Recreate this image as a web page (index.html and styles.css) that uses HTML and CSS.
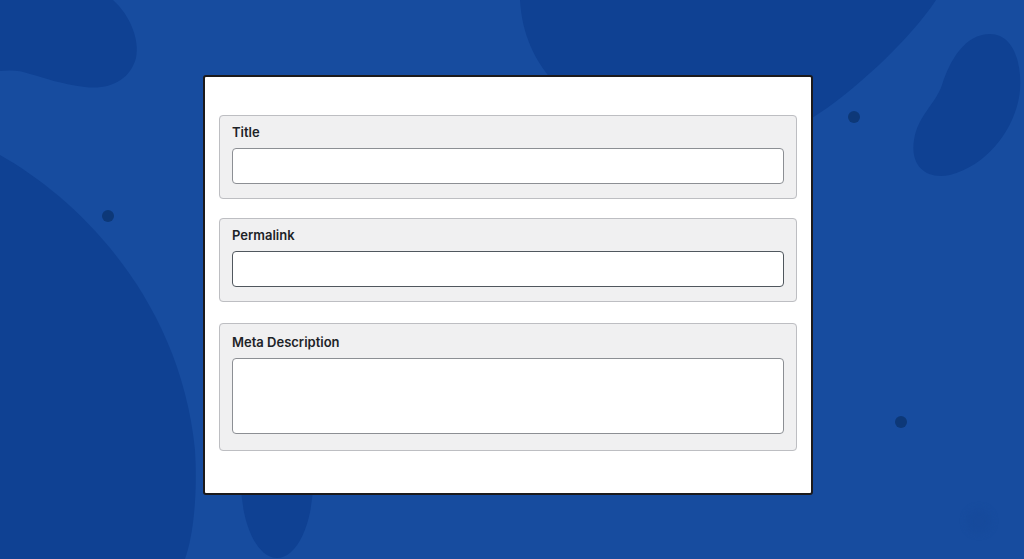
FILE: index.html
```html
<!DOCTYPE html>
<html lang="en">
<head>
<meta charset="utf-8">
<title>Post fields</title>
<link rel="stylesheet" href="styles.css">
</head>
<body>
<svg class="backdrop" width="1024" height="559" viewBox="0 0 1024 559" aria-hidden="true">
  <path class="blob" d="M0,0 H113 C130,15 140,40 136,58 C130,80 110,90 85,87 C60,84 45,78 30,74 C20,70 10,70 0,71 Z"/>
  <path class="blob" d="M0,155 C80,200 180,300 195,450 C198,500 192,540 185,559 H0 Z"/>
  <path class="blob" d="M520,0 C522,35 535,60 552,80 L700,220 L812,118 C850,95 910,40 936,0 Z"/>
  <path class="blob" d="M990,34 C1012,34 1022,60 1020,90 C1017,125 990,165 950,175 C925,180 910,165 914,140 C918,115 935,105 942,85 C950,60 965,34 990,34 Z"/>
  <ellipse class="blob" cx="277" cy="482" rx="36" ry="76"/>
  <circle class="faint" cx="979" cy="521" r="12"/>
  <circle class="dot" cx="108" cy="216" r="6"/>
  <circle class="dot" cx="854" cy="117" r="6"/>
  <circle class="dot" cx="901" cy="422" r="6"/>
</svg>
<main class="card">
  <fieldset class="field">
    <label class="field-label" for="title">Title</label>
    <input class="field-input" id="title" type="text">
  </fieldset>
  <fieldset class="field field-second">
    <label class="field-label" for="permalink">Permalink</label>
    <input class="field-input field-input-active" id="permalink" type="text">
  </fieldset>
  <fieldset class="field field-third">
    <label class="field-label" for="meta">Meta Description</label>
    <textarea class="field-input field-textarea" id="meta"></textarea>
  </fieldset>
</main>
</body>
</html>
```

FILE: styles.css
```css
* { box-sizing: border-box; }

html, body {
  margin: 0;
  padding: 0;
  width: 1024px;
  height: 559px;
  overflow: hidden;
}

body {
  position: relative;
  background: #174c9f;
  font-family: Inter, "Noto Sans", "Liberation Sans", sans-serif;
  display: flex;
  align-items: flex-start;
  padding: 75px 0 0 203px;
}

.backdrop {
  position: absolute;
  left: 0;
  top: 0;
  z-index: 0;
}

.blob { fill: #0f4193; }
.faint { fill: #164a9c; filter: blur(3px); }
.dot { fill: #0d3878; }

.card {
  position: relative;
  z-index: 1;
  flex: 0 0 auto;
  width: 610px;
  height: 420px;
  background: #ffffff;
  border: 2px solid #1c1a1c;
  border-radius: 3px;
  padding: 38px 14px 0 14px;
  display: flex;
  flex-direction: column;
}

.field {
  margin: 0;
  border: 1px solid #bdbec2;
  border-radius: 4px;
  background: #f0f0f1;
  padding: 8px 12px 14px;
  display: flex;
  flex-direction: column;
  min-width: 0;
}

.field-second { margin-top: 19px; }
.field-third { margin-top: 21px; padding-top: 10px; padding-bottom: 16px; }

.field-label {
  font-size: 13px;
  font-weight: 600;
  line-height: 17px;
  color: #1d2327;
  margin-bottom: 7px;
}

.field-input {
  display: block;
  width: 100%;
  height: 36px;
  margin: 0;
  background: #ffffff;
  border: 1px solid #8c8f94;
  border-radius: 4px;
  font-family: inherit;
  font-size: 14px;
  padding: 0 8px;
  outline: none;
}

.field-input-active { border-color: #50575e; }

.field-textarea {
  height: 76px;
  resize: none;
}
```
